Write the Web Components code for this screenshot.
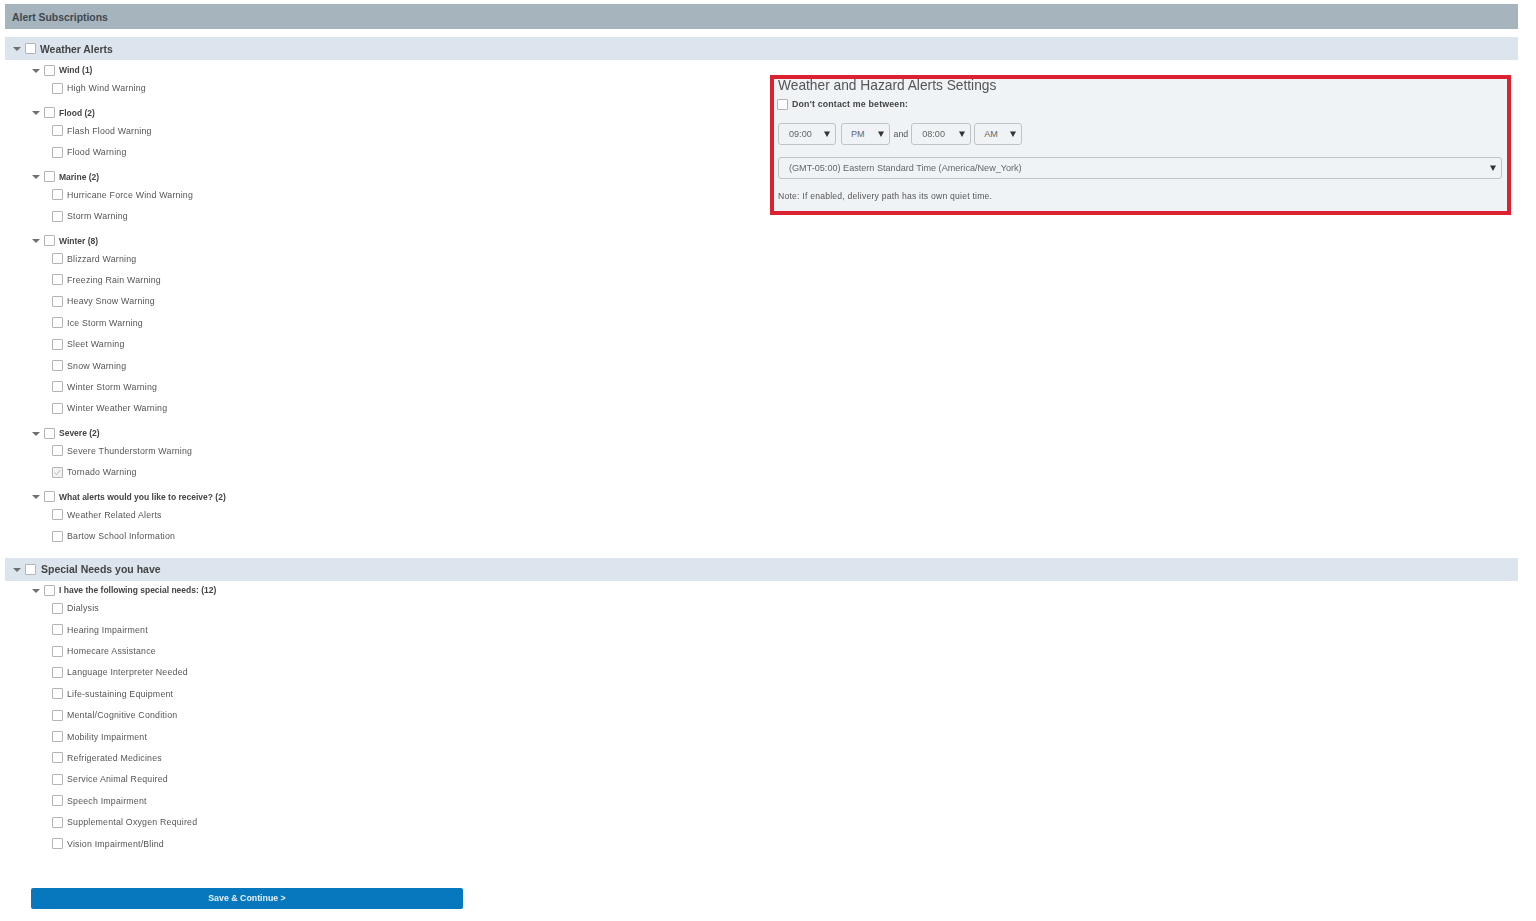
<!DOCTYPE html>
<html>
<head>
<meta charset="utf-8">
<title>Alert Subscriptions</title>
<style>
  html, body { margin: 0; padding: 0; background: #fff; }
  body { font-family: "Liberation Sans", Arial, sans-serif; color: #555; height: 921px; overflow: hidden; }
  alert-page { filter: blur(0.4px); }
</style>
</head>
<body>
<alert-page title="Alert Subscriptions">
  <alert-section label="Weather Alerts" slot="sections" style="--bar-size:10.4px;--bar-gap:4px;--body-top:3px;--label-top:1px;--label-bottom:0">
    <alert-group label="Wind (1)"><alert-item>High Wind Warning</alert-item></alert-group>
    <alert-group label="Flood (2)">
      <alert-item>Flash Flood Warning</alert-item>
      <alert-item>Flood Warning</alert-item>
    </alert-group>
    <alert-group label="Marine (2)">
      <alert-item>Hurricane Force Wind Warning</alert-item>
      <alert-item>Storm Warning</alert-item>
    </alert-group>
    <alert-group label="Winter (8)">
      <alert-item>Blizzard Warning</alert-item>
      <alert-item>Freezing Rain Warning</alert-item>
      <alert-item>Heavy Snow Warning</alert-item>
      <alert-item>Ice Storm Warning</alert-item>
      <alert-item>Sleet Warning</alert-item>
      <alert-item>Snow Warning</alert-item>
      <alert-item>Winter Storm Warning</alert-item>
      <alert-item>Winter Weather Warning</alert-item>
    </alert-group>
    <alert-group label="Severe (2)">
      <alert-item>Severe Thunderstorm Warning</alert-item>
      <alert-item checked>Tornado Warning</alert-item>
    </alert-group>
    <alert-group label="What alerts would you like to receive? (2)">
      <alert-item>Weather Related Alerts</alert-item>
      <alert-item>Bartow School Information</alert-item>
    </alert-group>
    <quiet-panel slot="aside"></quiet-panel>
  </alert-section>
  <alert-section label="Special Needs you have" slot="sections">
    <alert-group label="I have the following special needs: (12)">
      <alert-item>Dialysis</alert-item>
      <alert-item>Hearing Impairment</alert-item>
      <alert-item>Homecare Assistance</alert-item>
      <alert-item>Language Interpreter Needed</alert-item>
      <alert-item>Life-sustaining Equipment</alert-item>
      <alert-item>Mental/Cognitive Condition</alert-item>
      <alert-item>Mobility Impairment</alert-item>
      <alert-item>Refrigerated Medicines</alert-item>
      <alert-item>Service Animal Required</alert-item>
      <alert-item>Speech Impairment</alert-item>
      <alert-item>Supplemental Oxygen Required</alert-item>
      <alert-item>Vision Impairment/Blind</alert-item>
    </alert-group>
  </alert-section>
  <save-button slot="footer">Save &amp; Continue &gt;</save-button>
</alert-page>

<script>
const checkStyle = `
  .box {
    flex: none;
    box-sizing: border-box;
    width: 11px;
    height: 11px;
    background: #fff;
    border: 1px solid #b4b4b4;
    border-radius: 1px;
    display: block;
  }
`;
const arrow = `<svg class="arrow" width="8" height="4" viewBox="0 0 8 4"><path d="M0 0H8L4 4Z" fill="#6f6f6f"/></svg>`;

class AlertPage extends HTMLElement {
  connectedCallback() {
    this.attachShadow({ mode: 'open' });
    this.shadowRoot.innerHTML = `
      <style>
        :host { display: block; padding: 4px 18px 0 5px; }
        header {
          height: 25px;
          line-height: 27px;
          background: #a6b4bd;
          color: #3f4850;
          font-size: 10.4px;
          font-weight: bold;
          padding-left: 7px;
          margin-bottom: 8px;
        }
        footer { margin: 26.6px 0 0 26px; }
      </style>
      <header>${this.getAttribute('title')}</header>
      <slot name="sections"></slot>
      <footer><slot name="footer"></slot></footer>
    `;
  }
}

class AlertSection extends HTMLElement {
  connectedCallback() {
    this.attachShadow({ mode: 'open' });
    this.shadowRoot.innerHTML = `
      <style>
        ${checkStyle}
        :host { display: block; margin-bottom: 4.4px; }
        .bar {
          height: 23px;
          background: #dce5ed;
          display: flex;
          align-items: center;
          padding-left: 8px;
          color: #444;
          font-size: var(--bar-size, 10.5px);
          font-weight: bold;
        }
        .bar .label { margin: var(--label-top, 0) 0 var(--label-bottom, 1px); }
        .arrow { margin-right: 4px; margin-top: 1px; }
        .box { margin-right: var(--bar-gap, 5px); }
        .body { display: flex; justify-content: space-between; padding: var(--body-top, 2px) 7px 0 27px; }
        .tree { flex: none; width: 500px; }
        ::slotted(quiet-panel) { margin-top: 11.5px; }
      </style>
      <div class="bar">${arrow}<span class="box"></span><span class="label">${this.getAttribute('label')}</span></div>
      <div class="body">
        <div class="tree"><slot></slot></div>
        <slot name="aside"></slot>
      </div>
    `;
  }
}

class AlertGroup extends HTMLElement {
  connectedCallback() {
    this.attachShadow({ mode: 'open' });
    this.shadowRoot.innerHTML = `
      <style>
        ${checkStyle}
        :host { display: block; margin-bottom: 6.8px; }
        .head {
          height: 14.4px;
          display: flex;
          align-items: center;
          color: #444;
          font-size: 8.5px;
          font-weight: bold;
        }
        .arrow { margin-right: 4px; margin-top: 1px; }
        .box { margin-right: 4px; }
      </style>
      <div class="head">${arrow}<span class="box"></span><span>${this.getAttribute('label')}</span></div>
      <slot></slot>
    `;
  }
}

class AlertItem extends HTMLElement {
  connectedCallback() {
    this.attachShadow({ mode: 'open' });
    const tick = this.hasAttribute('checked')
      ? `<svg viewBox="0 0 11 11" width="9" height="9"><path d="M2 5.5L4.5 8L9 2.5" fill="none" stroke="#a9b4ba" stroke-width="1.1"/></svg>`
      : '';
    this.shadowRoot.innerHTML = `
      <style>
        ${checkStyle}
        :host {
          display: flex;
          align-items: center;
          height: 21.4px;
          padding-left: 20px;
          font-size: 8.8px;
          letter-spacing: 0.2px;
          color: #555;
        }
        .box { margin-right: 4px; display: flex; align-items: center; justify-content: center; }
        .box.on { background: #f0f2f3; }
      </style>
      <span class="box ${tick ? 'on' : ''}">${tick}</span>
      <span><slot></slot></span>
    `;
  }
}

class FakeSelect extends HTMLElement {
  connectedCallback() {
    this.attachShadow({ mode: 'open' });
    this.shadowRoot.innerHTML = `
      <style>
        :host {
          display: flex;
          align-items: center;
          justify-content: space-between;
          box-sizing: border-box;
          height: 22px;
          padding: 0 5px 0 10px;
          border: 1px solid #c0c4c6;
          border-radius: 3px;
          background: #eff3f6;
          color: #666;
          font-size: 9.1px;
        }
        svg { flex: none; }
      </style>
      <span><slot></slot></span>
      <svg width="6" height="6" viewBox="0 0 6 6"><path d="M0 0.5H6L3 6Z" fill="#333"/></svg>
    `;
  }
}

class QuietPanel extends HTMLElement {
  connectedCallback() {
    this.attachShadow({ mode: 'open' });
    this.shadowRoot.innerHTML = `
      <style>
        ${checkStyle}
        :host {
          display: block;
          flex: none;
          box-sizing: border-box;
          width: 741px;
          height: 140.5px;
          border: 4px solid #dc2231;
          background: #eff3f6;
          padding: 0 5px 0 4px;
        }
        h2 { margin: 0; font-size: 13.75px; font-weight: normal; line-height: 13.5px; color: #555; }
        .contact {
          display: flex;
          align-items: center;
          height: 12px;
          margin: 6px 0 13px -1px;
          font-size: 8.8px;
          font-weight: bold;
          letter-spacing: 0.18px;
          color: #444;
        }
        .contact .box { margin-right: 4px; }
        .times { display: flex; align-items: center; margin-bottom: 12px; }
        .and { font-size: 8.8px; color: #555; margin: 0 3px 0 3.5px; }
        .tz { margin-bottom: 12px; }
        .note { font-size: 8.6px; color: #555; letter-spacing: 0.23px; }
        .t1 { width: 58px; margin-right: 5px; }
        .t2 { width: 49px; padding-left: 9px; }
        .t3 { width: 60px; margin-right: 3px; }
        .t4 { width: 48px; padding-left: 9px; }
      </style>
      <h2>Weather and Hazard Alerts Settings</h2>
      <div class="contact"><span class="box"></span><span>Don't contact me between:</span></div>
      <div class="times">
        <fake-select class="t1">09:00</fake-select>
        <fake-select class="t2">PM</fake-select>
        <span class="and">and</span>
        <fake-select class="t3">08:00</fake-select>
        <fake-select class="t4">AM</fake-select>
      </div>
      <fake-select class="tz">(GMT-05:00) Eastern Standard Time (America/New_York)</fake-select>
      <div class="note">Note: If enabled, delivery path has its own quiet time.</div>
    `;
  }
}

class SaveButton extends HTMLElement {
  connectedCallback() {
    this.attachShadow({ mode: 'open' });
    this.shadowRoot.innerHTML = `
      <style>
        :host {
          display: flex;
          align-items: center;
          justify-content: center;
          box-sizing: border-box;
          width: 432px;
          height: 21px;
          background: #0878be;
          border-radius: 2px;
          color: #e6f1f8;
          font-size: 8.8px;
          font-weight: bold;
        }
      </style>
      <slot></slot>
    `;
  }
}

customElements.define('alert-page', AlertPage);
customElements.define('alert-section', AlertSection);
customElements.define('alert-group', AlertGroup);
customElements.define('alert-item', AlertItem);
customElements.define('fake-select', FakeSelect);
customElements.define('quiet-panel', QuietPanel);
customElements.define('save-button', SaveButton);
</script>
</body>
</html>
